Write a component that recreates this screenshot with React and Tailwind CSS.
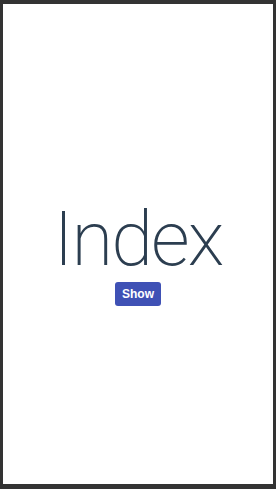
export default function App() {
  return (
    <div className="h-[489px] w-[276px] border-x-[3px] border-t-[4px] border-b-[5px] border-[#333333] bg-white">
      <div className="flex h-full flex-col items-center pt-[189px]">
        <h1 className="font-['Roboto',sans-serif] text-[76px] font-extralight leading-[92px] tracking-[-2px] text-[#2c3e50]">Index</h1>
        <button className="-mt-[3px] h-[24px] w-[46px] rounded-[3px] bg-[#3f51b5] font-['Liberation_Sans',sans-serif] text-[12px] font-bold text-white">
          Show
        </button>
      </div>
    </div>
  );
}
